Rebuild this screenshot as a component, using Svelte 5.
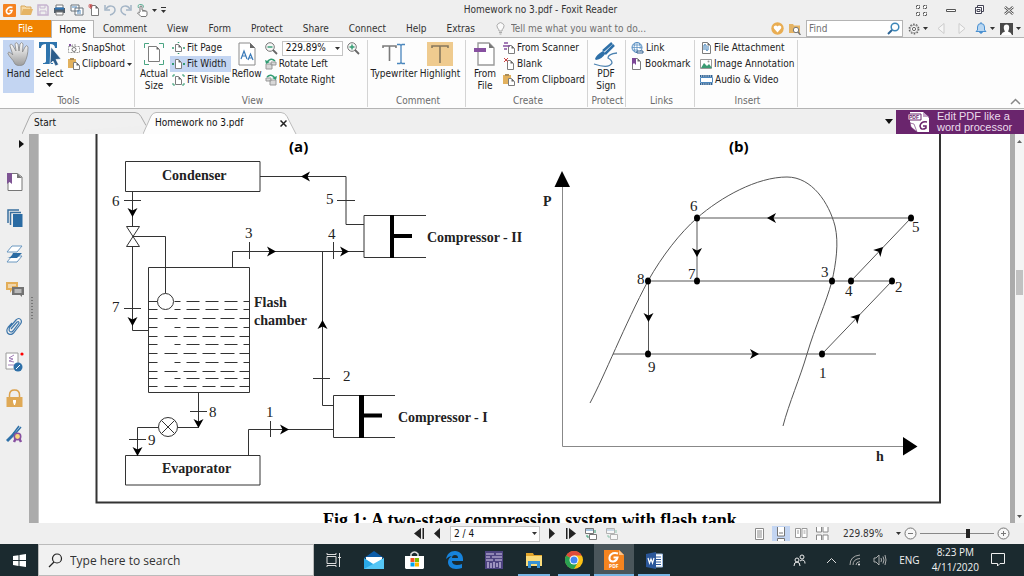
<script lang="ts">
    let zoom = '229.89%';
    let page = '2 / 4';
    let slider = 65;
    let find = '';
    let tell = '';
    let search = '';

    const menus = ['Comment', 'View', 'Form', 'Protect', 'Share', 'Connect', 'Help', 'Extras'];
    const quick = ['logo', 'open', 'save', 'print', 'batch', 'newdoc', 'undo', 'redo', 'touch'];
    const panels = ['bookmarks', 'pages', 'layers', 'comments', 'attach', 'signature', 'security', 'certify'];
    const apps = ['taskview', 'mail', 'store', 'edge', 'circuit', 'explorer', 'chrome', 'foxit', 'word'];
    const running = ['explorer', 'chrome', 'foxit', 'word'];

    // water level marks in the flash chamber
    const levels = [301.5, 309.5, 318.5, 327.5, 336.5, 344.5, 353.5, 362.5, 371.5, 378.5, 386.5];
    const evenMarks = 'h9 m7 0 h13 m6 0 h13 m6 0 h13 m5 0 h14 m5 0 h10';
    const oddMarks = 'h9 m17 0 h6 m6 0 h13 m6 0 h13 m6 0 h13 m6 0 h6';
    const longRows = [318.5, 336.5, 353.5, 371.5, 386.5];

    const arrows = [
        [301, 176.5, 180], [276, 251.5, 0], [349, 251.5, 0], [289, 429.5, 0],
        [132.5, 217, 90], [132.5, 326, 90], [198.5, 428, 90], [137.5, 456, 90], [322.5, 320, -90],
        [767, 218, 180], [697, 257, 90], [648.5, 322, 90], [759, 354, 0],
        [883, 247, -46], [860, 314, -46]
    ];
    const states = [[697, 218], [911, 218], [648, 281], [697, 281], [832, 281], [851, 281], [892, 281], [648, 354], [822, 354]];
    const labels = [
        ['6', 112, 206], ['5', 326, 204], ['3', 245, 238], ['4', 328, 239], ['7', 112, 312],
        ['2', 343, 381], ['8', 209, 417], ['1', 266, 417], ['9', 148, 445],
        ['6', 690, 211], ['5', 912, 232], ['8', 637, 284], ['7', 688, 279], ['3', 821, 277],
        ['4', 845, 296], ['2', 895, 292], ['9', 648, 372], ['1', 819, 378]
    ];
</script>

{#snippet sheet(x, y, w, h)}
    <path d="M{x} {y}h{w - 3}l3 3v{h - 3}h-{w}z" fill="#fff" stroke="#7c7c7c" />
    <path d="M{x + w - 3} {y}v3h3z" fill="#666" />
{/snippet}

{#snippet icon(name)}
    {#if name === 'logo'}
        <svg width="13" height="13" viewBox="0 0 13 13"><rect width="13" height="13" rx="1" fill="#f58220" /><path d="M9.5 3.5C6 2 3 5 3.500 8c1 3 5 2 5.500-1.500H6.500" fill="none" stroke="#fff" stroke-width="1.700" /></svg>
    {:else if name === 'open'}
        <svg width="13" height="12" viewBox="0 0 13 12"><path d="M1 11V2h4l1 1h5v2" fill="#f6d9a4" stroke="#d8a75a" /><path d="M1 11l2-6h10l-2 6z" fill="#e5b465" /></svg>
    {:else if name === 'save'}
        <svg width="12" height="12" viewBox="0 0 12 12"><path d="M1 1h8.500L11 2.500V11H1z" fill="#eee" stroke="#c6b4cf" stroke-width="1.500" /><path d="M3 1v3h5V1M3 11V7h6v4" fill="none" stroke="#c6b4cf" /></svg>
    {:else if name === 'print'}
        <svg width="13" height="12" viewBox="0 0 13 12"><path d="M3 1h7v3H3z" fill="#fff" stroke="#777" /><path d="M1 4h11v5H1z" fill="#555f68" /><path d="M2 4.500h9" stroke="#2f75b5" stroke-width="2" /><path d="M3 8h7v3H3z" fill="#fff" stroke="#777" /></svg>
    {:else if name === 'batch'}
        <svg width="14" height="12" viewBox="0 0 14 12"><path d="M1 1h8v6H1zM5 4h8v7H5z" fill="#fff" stroke="#68727a" /><path d="M2 3h5M7 7h4M7 9h4" stroke="#4d87bd" /></svg>
    {:else if name === 'newdoc'}
        <svg width="12" height="12" viewBox="0 0 12 12">{@render sheet(3.5, 1.5, 7, 10)}<path d="M0 2h5M2.500 0v5M1 0l3 4M4 0L1 4" stroke="#c74343" stroke-width=".7" /></svg>
    {:else if name === 'undo' || name === 'redo'}
        <svg class:flip={name === 'redo'} width="12" height="12" viewBox="0 0 12 12"><path d="M2 5c3-5 9-3 9 1 0 3-2 4-5 5" fill="none" stroke="#a4b5c6" stroke-width="1.500" /><path d="M1 1v5h5" fill="none" stroke="#a4b5c6" stroke-width="1.500" /></svg>
    {:else if name === 'touch'}
        <svg width="12" height="13" viewBox="0 0 12 13"><path d="M4 8V2.500q1-1 2 0V6l4 1q1 0 1 1v3l-1 1.500H5L1.500 9q1-1.500 2.500 0M7 6v2M9 7v1" fill="#fff" stroke="#777" /><path d="M2.500 4Q1 0 5 .5q3 0 2.500 3" fill="none" stroke="#62b199" /></svg>
    {:else if name === 'bulb'}
        <svg width="9" height="13" viewBox="0 0 9 13"><path d="M3 9q0-2-1.500-3a3.500 3.500 0 1 1 6 0Q6 7 6 9zM3 10.500h3M3.500 12h2" fill="#fafafa" stroke="#aaa" /></svg>
    {:else if name === 'heart'}
        <svg width="13" height="13" viewBox="0 0 13 13"><circle cx="6.500" cy="6.500" r="6.200" fill="#e9ad52" /><path d="M6.500 10.500L3 6.500Q2 4 4.500 3.500q1.500 0 2 1 .5-1 2-1Q11 4 10 6.500z" fill="#fff" /></svg>
    {:else if name === 'foldersearch'}
        <svg width="12" height="12" viewBox="0 0 12 12"><path d="M0 1h4l1 1.500h6V10H0z" fill="#e5b465" /><circle cx="7" cy="7" r="2.700" fill="#fff" stroke="#777" /><path d="M9 9l2.500 3" stroke="#777" stroke-width="1.500" /></svg>
    {:else if name === 'lens'}
        <svg width="13" height="13" viewBox="0 0 13 13"><circle cx="8" cy="5" r="3.800" fill="none" stroke="#3d87b8" stroke-width="1.500" /><path d="M5 8l-4 4" stroke="#2b6496" stroke-width="2" /></svg>
    {:else if name === 'gear'}
        <svg width="12" height="12" viewBox="0 0 12 12"><circle cx="6" cy="6" r="4.700" fill="none" stroke="#666" stroke-width="1.400" stroke-dasharray="1.600 1.350" /><circle cx="6" cy="6" r="3.800" fill="#f8f8f8" stroke="#888" stroke-width=".7" /><circle cx="6" cy="6" r="1.600" fill="#fff" stroke="#666" /></svg>
    {:else if name === 'prev' || name === 'next'}
        <svg class:flip={name === 'next'} width="8" height="11" viewBox="0 0 8 11"><path d="M7 .5v10l-6-5z" fill="#f6f6f6" stroke="#ccc" /></svg>
    {:else if name === 'bell'}
        <svg width="12" height="13" viewBox="0 0 12 13"><path d="M1 9.500L2.500 8V5q0-3.500 3.500-3.500T9.500 5v3L11 9.500z" fill="#b9d7f2" stroke="#4a90d0" /><path d="M6 0v1M4.500 10q1.500 3 3 0z" fill="#4a90d0" stroke="#4a90d0" /></svg>
    {:else if name === 'user'}
        <svg width="13" height="12" viewBox="0 0 13 12"><path fill="#4a4a4a" d="M0 0h13v12H0z" /><path d="M1 12q1-3 4-3.500C3 5 3.500 1.500 6.500 1.500S10 5 8 8.500q3 .5 4 3.500z" fill="#fff" /></svg>
    {:else if name === 'hand'}
        <svg width="24" height="24" viewBox="0 0 24 24"><defs><linearGradient id="glove" x2="0" y2="1"><stop stop-color="#fff" /><stop offset="1" stop-color="#9d9d9d" /></linearGradient></defs><path d="M8 22C6 17 2 15 .8 11q.7-2 3 0l2 2L3 4q0-3 2.500-1L9 9 8 2q.5-3 3 0l1 7 1-7q2-3 3 0l-.5 8L18 5q2-3 3 0c0 7-1 11-4 17-2 2-7 2-9 0z" fill="url(#glove)" stroke="#888" stroke-width=".8" /></svg>
    {:else if name === 'select'}
        <svg width="24" height="24" viewBox="0 0 24 24"><path d="M1 0h18v6h-2q0-4-5-4v17q0 2 3 2v1H5v-1q3 0 3-2V2Q3 2 3 6H1z" fill="#2e74ad" /><path d="M13 5l10 12-5 .5 2.500 5-3 1.500-2.500-5-3 3z" fill="#2d5d8b" stroke="#fff" stroke-width=".6" /></svg>
    {:else if name === 'snapshot'}
        <svg width="12" height="11" viewBox="0 0 12 11"><path d="M.5 3.500h11v6H.5zM4 3V2h4v1" fill="#fff" stroke="#999" stroke-dasharray="2 1" /><circle cx="6" cy="6.500" r="2" fill="none" stroke="#777" /><path d="M1 2h2" stroke="#8450a0" stroke-width="2" /></svg>
    {:else if name === 'clipboard' || name === 'fromclip'}
        <svg width="12" height="12" viewBox="0 0 12 12"><path d="M0 1h8v9H0z" fill="#e2b15e" /><path d="M2 0h4v2H2z" fill="#a98c5a" />{@render sheet(5.5, 4.5, 6, 7)}</svg>
    {:else if name === 'actual'}
        <svg width="20" height="22" viewBox="0 0 20 22"><path d="M.5 5V.5H5M15 .5h4.500V5M.5 17v4.500H5M15 21.500h4.500V17" fill="none" stroke="#4aa583" />{@render sheet(4.5, 3.5, 11, 15)}</svg>
    {:else if name === 'fitpage'}
        <svg width="13" height="12" viewBox="0 0 13 12"><path d="M0 6h2M11 6h2M6.500 0v1M6.500 11v1" stroke="#329c73" stroke-width="1.500" />{@render sheet(3.5, 2.5, 6, 7)}</svg>
    {:else if name === 'fitwidth'}
        <svg width="13" height="12" viewBox="0 0 13 12"><path d="M0 6h2M11 6h2" stroke="#329c73" stroke-width="2" />{@render sheet(3.5, 1.5, 6, 9)}</svg>
    {:else if name === 'fitvisible'}
        <svg width="13" height="12" viewBox="0 0 13 12"><path d="M1 3V1h2M10 1h2v2M1 9v2h2M10 11h2V9" fill="none" stroke="#329c73" />{@render sheet(3.5, 2.5, 6, 8)}</svg>
    {:else if name === 'reflow'}
        <svg width="18" height="24" viewBox="0 0 18 24"><path d="M1 1h11l5 5v17H1z" fill="#fff" stroke="#8a8a8a" /><path d="M12 1v5h5z" fill="#666" /><path d="M3 17l3-8 3 8M4 14h4M10 18l2.500-6 2.500 6M11 16h3" fill="none" stroke="#3a7ab8" stroke-width="1.200" /></svg>
    {:else if name === 'zoomout' || name === 'zoomin'}
        <svg width="13" height="13" viewBox="0 0 13 13"><circle cx="5" cy="5" r="4.300" fill="#f6f6f6" stroke="#777" /><path d="M8 8l4 4" stroke="#666" stroke-width="1.800" /><path d={name === 'zoomin' ? 'M2.500 5h5M5 2.500v5' : 'M2.500 5h5'} stroke="#329c73" stroke-width="1.400" /></svg>
    {:else if name === 'rotleft' || name === 'rotright'}
        <svg class:flip={name === 'rotright'} width="12" height="12" viewBox="0 0 12 12"><path d="M6 4h5v3H6zM1 6h6v5H1z" fill="#d8d8d8" stroke="#999" /><path d="M10 3Q6-1 2 4" fill="none" stroke="#329c73" stroke-width="1.500" /><path d="M0 2l1 4 4-2z" fill="#329c73" /></svg>
    {:else if name === 'typewriter'}
        <svg width="24" height="24" viewBox="0 0 24 24"><path d="M1 6V4h13v2M7.500 4v15" fill="none" stroke="#7b7b7b" stroke-width="1.600" /><path d="M15 2.500h3l1 1 1-1h3M15 21.500h3l1-1 1 1h3M19 3v18" fill="none" stroke="#4a86bd" stroke-width="1.300" /></svg>
    {:else if name === 'highlight'}
        <svg width="26" height="24" viewBox="0 0 26 24"><path d="M0 0h26v24H0z" fill="#efcb8f" /><path d="M5 6V4h16v2M13 4v17" fill="none" stroke="#86775d" stroke-width="1.600" /></svg>
    {:else if name === 'fromfile'}
        <svg width="22" height="24" viewBox="0 0 22 24"><path d="M4 1h11l5 5v17H4z" fill="#fff" stroke="#999" stroke-width="1.400" /><path d="M15 1v5h5z" fill="#777" /><path d="M0 6h12v4H0z" fill="#8750a0" /></svg>
    {:else if name === 'scanner'}
        <svg width="12" height="12" viewBox="0 0 12 12">{@render sheet(5.5, 3.5, 6, 8)}<path d="M1 1h4M0 4h7M1 7h3" stroke="#8750a0" stroke-width="1.500" /></svg>
    {:else if name === 'blank'}
        <svg width="12" height="12" viewBox="0 0 12 12">{@render sheet(4.5, 2.5, 6, 9)}<path d="M1 0l4 4M5 0L1 4" stroke="#c94040" /></svg>
    {:else if name === 'pen'}
        <svg width="26" height="26" viewBox="0 0 26 26"><path d="M10 10L19 2M12 13L21 4" stroke="#2e70a8" stroke-width="2.500" /><path d="M2 18q1-4 8-8l2.500 2.500Q9 18 3 19z" fill="#2e70a8" /><path d="M1 23q15 5 18-1 0-3-4-5 0-4 9-5" fill="none" stroke="#4c82b0" stroke-width="1.300" /></svg>
    {:else if name === 'link'}
        <svg width="13" height="12" viewBox="0 0 13 12"><circle cx="6" cy="5.500" r="5" fill="#fff" stroke="#4c86bd" /><path d="M1 5.500h10M6 .5v10M2 3h8M2 8h5M4 1Q2 5 4 10M8 1q2 4 1 6" fill="none" stroke="#4c86bd" stroke-width=".7" /><path d="M6 9h6v2H6z" fill="#fff" stroke="#2e5c8c" /></svg>
    {:else if name === 'bookmark'}
        <svg width="12" height="12" viewBox="0 0 12 12">{@render sheet(1.5, 0.5, 8, 11)}<path d="M1 0h4v7L3 5 1 7z" fill="#7b4796" /></svg>
    {:else if name === 'fileattach'}
        <svg width="12" height="12" viewBox="0 0 12 12">{@render sheet(2.5, 0.5, 8, 11)}<path d="M4 8V3q1.500-1 2 0v5q1.500 1 2 0V4" fill="none" stroke="#3d7fb8" /></svg>
    {:else if name === 'image'}
        <svg width="12" height="12" viewBox="0 0 12 12"><path d="M.5 1.500h11v9H.5z" fill="#fff" stroke="#999" /><path d="M1 10l3-5 3 3 2-2 3 4z" fill="#3a9b73" /><circle cx="8.500" cy="3.500" r="1" fill="#999" /></svg>
    {:else if name === 'video'}
        <svg width="13" height="10" viewBox="0 0 13 10"><path d="M0 1h13M0 9h13" stroke="#2c5f91" stroke-width="2" stroke-dasharray="1.500 .6" /><path d="M.5 2.500h12v5H.5z" fill="#fff" stroke="#4c86bd" /></svg>
    {:else if name === 'bookmarks'}
        <svg width="16" height="18" viewBox="0 0 16 18"><path d="M1 .5h9.500L15 4v13.500H1z" fill="#fff" stroke="#777" /><path d="M10 .5V5h5z" fill="#777" /><path d="M0 0h5v11l-2.500-2L0 11z" fill="#7e5494" /></svg>
    {:else if name === 'pages'}
        <svg width="16" height="19" viewBox="0 0 16 19"><path d="M1 14V1h11M3.500 16V3.500H14" fill="none" stroke="#386f9f" stroke-width="1.500" /><path d="M6 5h9.500v13H6z" fill="#2a6ba3" /></svg>
    {:else if name === 'layers'}
        <svg width="17" height="18" viewBox="0 0 17 18"><path d="M1 17l5-6h10l-5 6zM1 7l5-6h10l-5 6z" fill="#fff" stroke="#6b98c0" /><path d="M1 13q4 0 6-5h9l-5 5z" fill="#2a6ba3" /></svg>
    {:else if name === 'comments'}
        <svg width="18" height="16" viewBox="0 0 18 16"><path d="M0 0h12v8H6l-2 3V8H0z" fill="#e3ae59" /><path d="M6 5h12v8h-2v2l-2-2H6z" fill="#737373" /><path d="M2 3h8M2 5h4M8.500 8h7M8.500 10h7" stroke="#fff" /></svg>
    {:else if name === 'attach'}
        <svg width="17" height="18" viewBox="0 0 17 18"><path d="M5 12l6-7q2-1 2 1l-6 8q-2 2-3.500 0-1-2 .5-4l6-7q3-3 5 0 1 2-.5 4l-7 9q-3 3-6 0-1.500-3 .5-5.500l4-4.500" fill="none" stroke="#3d76aa" stroke-width="1.200" /></svg>
    {:else if name === 'signature'}
        <svg width="19" height="20" viewBox="0 0 19 20"><path d="M1 1h12v16H1z" fill="#fff" stroke="#9a9a9a" /><path d="M9 3L4 6l4 1-4 2 5 1M3 13h7" fill="none" stroke="#8d62a7" stroke-width=".8" /><circle cx="13" cy="15" r="4.500" fill="#2e70a8" /><path d="M11 17l4-4" stroke="#fff" /><circle cx="17" cy="2" r="1.600" fill="#f00" /></svg>
    {:else if name === 'security'}
        <svg width="17" height="19" viewBox="0 0 17 19"><path d="M3.500 9V6q0-5 5-5t5 5v3" fill="none" stroke="#dba14c" stroke-width="1.500" /><path d="M.5 8h16v10H.5z" fill="#dfa956" /><path d="M7 11h3v2l-1 3H8l-1-3z" fill="#fff" /></svg>
    {:else if name === 'certify'}
        <svg width="17" height="18" viewBox="0 0 17 18"><path d="M1 16l8-8" stroke="#2e70a8" stroke-width="3" /><path d="M7 9l6-8M9 9l6-7" stroke="#2e70a8" stroke-width="1.500" /><path d="M8 17l2-4M15 17l-2-4" stroke="#8750a0" stroke-width="2.500" /><circle cx="11.500" cy="11.500" r="3.200" fill="#fbd77e" stroke="#8750a0" stroke-width="1.600" /></svg>
    {:else if name === 'taskview'}
        <svg width="16" height="14" viewBox="0 0 16 14"><path d="M1 3.500h9v7H1zM1 0v1.500h9V0M1 14v-1.500h9V14M13.500 0v14M12 4.500h3" fill="none" stroke="#ddd" /></svg>
    {:else if name === 'mail'}
        <svg width="20" height="19" viewBox="0 0 20 19"><path d="M0 7l10-7 10 7z" fill="#0c5ca8" /><path d="M2 6h16v7H2z" fill="#fff" /><path d="M0 7l10 6.500L20 7v11H0z" fill="#2aa9e8" /><path d="M0 18L20 7v11z" fill="#55c6f5" /></svg>
    {:else if name === 'store'}
        <svg width="19" height="19" viewBox="0 0 19 19"><path d="M6 6V3q3.500-4 7 0v3" fill="none" stroke="#ddd" stroke-width="1.500" /><path d="M0 5h19v12l-1 1H1l-1-1z" fill="#fff" /><path d="M5.500 7h4v4h-4z" fill="#f25022" /><path d="M10 7h4v4h-4z" fill="#7fba00" /><path d="M5.500 11.500h4v4h-4z" fill="#00a4ef" /><path d="M10 11.500h4v4h-4z" fill="#ffb900" /></svg>
    {:else if name === 'edge'}
        <svg width="17" height="18" viewBox="0 0 17 18"><path d="M0 8C1 3 4 0 9 0s8 4 8 8v2H6c0 3 3 4 5 4q3 0 5-1v4q-3 1-6 1c-5 0-8-3-8-7 0-3 2-5 4-6Q3 5 0 8zm6-1h6q0-3-3-3T6 7z" fill="#1683dc" fill-rule="evenodd" /></svg>
    {:else if name === 'circuit'}
        <svg width="18" height="18" viewBox="0 0 18 18"><path d="M0 0h18v18H0z" fill="#4d4380" /><path d="M1 3h8M11 3h6M1 6h4M7 6h10M1 9h7M10 9h7M3 11v6M6 12v5M9 11v6M12 12v4M15 11v6" stroke="#d5cbea" stroke-width="1.200" /></svg>
    {:else if name === 'explorer'}
        <svg width="18" height="16" viewBox="0 0 18 16"><path d="M1 1h7l1 2h8v11H1z" fill="#e2a52c" /><path d="M1 4h16v10H1z" fill="#fbdc7b" /><path d="M3 9h12v7h-3v-4H6v4H3z" fill="#3a93d4" /></svg>
    {:else if name === 'chrome'}
        <svg width="18" height="18" viewBox="0 0 18 18"><circle cx="9" cy="9" r="9" fill="#fbc116" /><path d="M9 9L1.200 4.500A9 9 0 0 1 16.800 4.500H9z" fill="#df4b3d" /><path d="M9 9L1.200 4.500A9 9 0 0 0 9 18l4-7z" fill="#2aa152" /><circle cx="9" cy="9" r="4.500" fill="#fff" /><circle cx="9" cy="9" r="3.500" fill="#4285f4" /></svg>
    {:else if name === 'foxit'}
        <svg width="20" height="20" viewBox="0 0 20 20"><path d="M0 0h15l5 5v15H0z" fill="#f5841f" /><path d="M15 0v5h5z" fill="#fdc388" /><path d="M14 3.500C8 2 5 5 5.500 9c1 4 7 3 8-1.500h-4" fill="none" stroke="#fff" stroke-width="2" /><text x="5" y="18" font-size="5" font-weight="700" fill="#fff">PDF</text></svg>
    {:else if name === 'word'}
        <svg width="17" height="17" viewBox="0 0 17 17"><path d="M8 2h8.500v13H8z" fill="#fff" stroke="#9bb9e0" /><path d="M9 5h6M9 7.500h6M9 10h6M9 12.500h6" stroke="#2b579a" /><path d="M0 2l10-2v17L0 15z" fill="#2b579a" /><path d="M2 6l1.500 5L5 7l1.500 4L8 6" fill="none" stroke="#fff" stroke-width="1.200" /></svg>
    {:else if name === 'singlepage'}
        <svg width="10" height="12" viewBox="0 0 10 12"><path d="M.5.5h8v11h-8zM2 3h5M2 5h5M2 7h5M2 9h5" fill="#fff" stroke="#8a8a8a" /></svg>
    {:else if name === 'continuous'}
        <svg width="10" height="14" viewBox="0 0 10 14"><path d="M1.500 0v9h7V0M1.500 14v-2.500h7V14M3 6h4" fill="#fff" stroke="#777" /></svg>
    {:else if name === 'facing'}
        <svg width="13" height="11" viewBox="0 0 13 11"><path d="M.5.500h5v9h-5zM7 .500h5v9H7zM2 3h2M2 5h2M8.500 3h2M8.500 5h2" fill="#fff" stroke="#999" /></svg>
    {:else if name === 'contfacing'}
        <svg width="13" height="13" viewBox="0 0 13 13"><path d="M.5 0v5h5V0M7 0v5h5V0M.5 13V8h5v5M7 13V8h5v5" fill="#fff" stroke="#888" /></svg>
    {:else if name === 'windows'}
        <svg width="13" height="13" viewBox="0 0 13 13"><path d="M0 2l5.500-.8V6H0zM6.500 1L13 0v6H6.500zM0 7h5.500v5L0 11zM6.500 7H13v6l-6.500-1z" fill="#fff" /></svg>
    {:else if name === 'swap' || name === 'swapoff'}
        <svg class:faded={name === 'swapoff'} width="12" height="12" viewBox="0 0 12 12"><path d="M.5.500h8v5h-8zM4.500 6.500h7v5h-7z" fill="#fff" stroke="#777" /><path d="M1 2h7" stroke="#4c86bd" /><path d="M10 2v3M2 7v2h2" fill="none" stroke="#329c73" /></svg>
    {/if}
{/snippet}

{#snippet caret()}
    <svg class="caret" width="5" height="3" viewBox="0 0 5 3"><path d="M0 0h5L2.500 3z" fill="#333" /></svg>
{/snippet}

{#snippet small(name, text, active = false)}
    <button class="small" class:active>{@render icon(name)}<span>{text}</span></button>
{/snippet}

{#snippet big(name, text, active = false)}
    <button class="big" class:active><span class="pic">{@render icon(name)}</span><span>{text}</span></button>
{/snippet}

<div class="app">
    <header class="titlebar">
        <div class="quick">
            {#each quick as q}
                <button aria-label={q}>{@render icon(q)}</button>
            {/each}
            {@render caret()}
            <svg width="5" height="6" viewBox="0 0 5 6"><path d="M0 .5h5" stroke="#333" /><path d="M0 3h5L2.500 6z" fill="#333" /></svg>
        </div>
        <h1>Homework no 3.pdf - Foxit Reader</h1>
        <div class="window-buttons">
            <button aria-label="Full screen"><svg width="11" height="11" viewBox="0 0 11 11"><path d="M.5.500h3v3h-3zM7.500.500h3v3h-3zM.5 7.500h3v3h-3zM7.500 7.500h3v3h-3z" fill="#fff" stroke="#555" stroke-dasharray="1.500 .5" /></svg></button>
            <button aria-label="Minimize"><svg width="10" height="11" viewBox="0 0 10 11"><path d="M.5 4.500h9v2h-9z" fill="#fff" stroke="#555" /></svg></button>
            <button aria-label="Restore"><svg width="10" height="10" viewBox="0 0 10 10"><path d="M2.500.500h6v6h-6z" fill="#fff" stroke="#445" /><path d="M.5 2.500h6v6h-6zM2 4.500h3v2H2z" fill="#fff" stroke="#445" /></svg></button>
            <button aria-label="Close"><svg width="10" height="9" viewBox="0 0 10 9"><path d="M1 1l8 7M9 1L1 8" stroke="#555" stroke-width="2.500" /><path d="M1 1l8 7M9 1L1 8" stroke="#fff" /></svg></button>
        </div>
    </header>

    <nav class="menubar">
        <button class="file">File</button>
        <button class="home">Home</button>
        <div class="menus">
            {#each menus as m}
                <button>{m}</button>
            {/each}
        </div>
        <label class="tell">{@render icon('bulb')}<input bind:value={tell} placeholder="Tell me what you want to do..." aria-label="Tell me" /></label>
        <div class="tools">
            <button aria-label="Favourites">{@render icon('heart')}</button>
            <button aria-label="Search folder">{@render icon('foldersearch')}</button>
            <label class="find"><input bind:value={find} placeholder="Find" aria-label="Find" />{@render icon('lens')}</label>
            <button aria-label="Settings">{@render icon('gear')}{@render caret()}</button>
            <button aria-label="Previous" class="step">{@render icon('prev')}</button>
            <button aria-label="Next" class="step">{@render icon('next')}</button>
            <button aria-label="Notifications">{@render icon('bell')}{@render caret()}</button>
            <button aria-label="Account">{@render icon('user')}{@render caret()}</button>
        </div>
    </nav>

    <section class="ribbon">
        <div class="group tools-group">
            <div class="items">
                <button class="big active"><span class="pic">{@render icon('hand')}</span><span>Hand</span></button>
                <button class="big"><span class="pic">{@render icon('select')}</span><span>Select</span><svg class="drop" width="7" height="4" viewBox="0 0 7 4"><path d="M0 0h7L3.500 4z" fill="#111" /></svg></button>
                <div class="stack">
                    {@render small('snapshot', 'SnapShot')}
                    <button class="small">{@render icon('clipboard')}<span>Clipboard</span>{@render caret()}</button>
                </div>
            </div>
            <h2>Tools</h2>
        </div>
        <div class="group view-group">
            <div class="items">
                {@render big('actual', 'Actual Size')}
                <div class="stack">
                    {@render small('fitpage', 'Fit Page')}
                    {@render small('fitwidth', 'Fit Width', true)}
                    {@render small('fitvisible', 'Fit Visible')}
                </div>
                {@render big('reflow', 'Reflow')}
                <div class="stack">
                    <div class="zoomrow">
                        <button aria-label="Zoom out">{@render icon('zoomout')}</button>
                        <div class="drop-box">
                            <select bind:value={zoom} aria-label="Zoom level">
                                <option>100%</option>
                                <option>229.89%</option>
                            </select>
                            {@render caret()}
                        </div>
                        <button aria-label="Zoom in">{@render icon('zoomin')}</button>
                    </div>
                    {@render small('rotleft', 'Rotate Left')}
                    {@render small('rotright', 'Rotate Right')}
                </div>
            </div>
            <h2>View</h2>
        </div>
        <div class="group comment-group">
            <div class="items">
                {@render big('typewriter', 'Typewriter')}
                {@render big('highlight', 'Highlight')}
            </div>
            <h2>Comment</h2>
        </div>
        <div class="group create-group">
            <div class="items">
                {@render big('fromfile', 'From File')}
                <div class="stack">
                    {@render small('scanner', 'From Scanner')}
                    {@render small('blank', 'Blank')}
                    {@render small('fromclip', 'From Clipboard')}
                </div>
            </div>
            <h2>Create</h2>
        </div>
        <div class="group protect-group">
            <div class="items">{@render big('pen', 'PDF Sign')}</div>
            <h2>Protect</h2>
        </div>
        <div class="group links-group">
            <div class="items">
                <div class="stack">
                    {@render small('link', 'Link')}
                    {@render small('bookmark', 'Bookmark')}
                </div>
            </div>
            <h2>Links</h2>
        </div>
        <div class="group insert-group">
            <div class="items">
                <div class="stack">
                    {@render small('fileattach', 'File Attachment')}
                    {@render small('image', 'Image Annotation')}
                    {@render small('video', 'Audio & Video')}
                </div>
            </div>
            <h2>Insert</h2>
        </div>
        <button class="collapse" aria-label="Collapse ribbon"><svg width="11" height="7" viewBox="0 0 11 7"><path d="M1 6l4.500-4.500L10 6" fill="none" stroke="#888" stroke-width="1.500" /></svg></button>
    </section>

    <div class="doctabs">
        <button class="doctab">
            <svg class="shape" viewBox="0 0 124 22" preserveAspectRatio="none"><path d="M0 22L8 4q2-3.500 5-3.500h100q4 0 6 4l5 9" fill="#f0f0f0" stroke="#aaa" /></svg>
            <span>Start</span>
        </button>
        <button class="doctab current">
            <svg class="shape" viewBox="0 0 154 22" preserveAspectRatio="none"><path d="M0 22L8 4q2-3.500 5-3.500h125q4 0 6 4L153 22" fill="#fdfdfd" stroke="#bbb" /></svg>
            <span>Homework no 3.pdf</span>
            <svg width="7" height="7" viewBox="0 0 7 7"><path d="M.5.500l6 6M6.500.500l-6 6" stroke="#222" stroke-width="1.500" /></svg>
        </button>
        <div class="promo">
            <svg width="8" height="5" viewBox="0 0 8 5"><path d="M0 0h8L4 5z" fill="#111" /></svg>
            <a href="#promo">
                <svg width="23" height="22" viewBox="0 0 23 22"><path d="M2 11V1h13l6 6v14H9" fill="#fff" /><path d="M15 1v5h6z" fill="#c6a3c9" /><path d="M0 3h13v6H0z" fill="#fff" stroke="#6a256d" /><text x="1" y="8" font-size="5" font-weight="700" fill="#6a256d">PDF</text><path d="M19 11q-6-1-7 4 1 5 6 2v-2h-3" fill="none" stroke="#6a256d" stroke-width="1.500" /><path d="M2 12l4 1 3 8-6-5z" fill="#fff" stroke="#6a256d" stroke-width=".6" /></svg>
                <span>Edit PDF like a<br />word processor</span>
            </a>
        </div>
    </div>

    <main class="workspace">
        <aside class="sidebar">
            <svg class="expand" width="5" height="8" viewBox="0 0 5 8"><path d="M0 0l5 4-5 4z" fill="#111" /></svg>
            {#each panels as p}
                <button aria-label={p}>{@render icon(p)}</button>
            {/each}
        </aside>
        <div class="splitter"><svg width="2" height="24" viewBox="0 0 2 24"><path d="M1 0v24" stroke="#777" stroke-width="2" stroke-dasharray="1 2" /></svg></div>
        <div class="document">
            <svg class="figure" viewBox="39 134 971 389" preserveAspectRatio="xMidYMin slice">
                <path class="frame" d="M96.500 134V502.500H940V134" />
                <text class="heading" x="289" y="152">(a)</text>
                <text class="heading" x="729" y="152">(b)</text>

                <g class="pipe">
                    <path d="M125.500 161.500h134.500v30h-134.500zM260 176.500h86V224.500h18" />
                    <path d="M426 215.500h-62v42h62M395 395.500h-61.500v42H395" />
                    <path d="M132.500 191.500v35M126.500 226.500h13l-13 20h13zM132.500 236.500h33v57M132.500 246.500v84h16" />
                    <path d="M148.500 267.500h101v125h-101zM232.500 267v-15.500H364M322.500 251.500v154h11" />
                    <path d="M198.500 392.500V427.500H178M158 427.500h-20.500V455M248.500 455v-25.500h85M125.500 455.500h134.500v29.500h-134.500z" />
                    <path d="M337 200.500h18M124 200.500h17M124 308.500h17M249.500 242v17M333.500 242v17M313 378.500h17M190 411.500h17M270.500 421v16M129 439.500h17" />
                    <circle cx="168" cy="427" r="9.500" />
                    <path d="M161.500 420.500l13 13M174.500 420.500l-13 13" />
                    {#each levels as y}
                        <path d="M148.500 {y}{longRows.includes(y) ? evenMarks : oddMarks}" />
                    {/each}
                </g>
                <circle class="float" cx="165.500" cy="301.500" r="8" />
                <path d="M390 215h4v19h18v4h-18v20h-4zM359 395h5v18.500h18v4h-18v20.500h-5z" />

                <text class="name" x="162" y="180">Condenser</text>
                <text class="name" x="162" y="473">Evaporator</text>
                <text class="name" x="254" y="307">Flash</text>
                <text class="name" x="254" y="325">chamber</text>
                <text class="name" x="427" y="242">Compressor - II</text>
                <text class="name" x="398" y="422">Compressor - I</text>

                <path class="axis" d="M562.500 180V446.500H905" />
                <path d="M562 171l8 16h-15.500zM903 437l14.500 9.500-14.500 9z" />
                <text class="name" x="543" y="206">P</text>
                <text class="name" x="876" y="461">h</text>
                <path class="level" d="M697 218h214M648 281h244M613 354h263M697 218v63" />
                <path class="curve" d="M648.500 281v73M851 281l60-63M822 354l70-73" />
                <path class="curve" d="M590 403C604 377 625 324 648 281C662 256 680 233 697 218C721 197 757 177 787 177C812 177 829 203 835 226C839 243 836 263 832 281C826 303 815 327 807 354C800 378 789 403 783 426" />
                {#each states as [x, y]}
                    <ellipse cx={x} cy={y} rx="3" ry="3.500" />
                {/each}
                {#each arrows as [x, y, turn]}
                    <path d="M0 0l-9-5 2.500 5-2.500 5z" transform="translate({x} {y}) rotate({turn})" />
                {/each}
                {#each labels as [t, x, y]}
                    <text class="num" {x} {y}>{t}</text>
                {/each}
                <text class="caption" x="323" y="526">Fig 1: A two-stage compression system with flash tank</text>
            </svg>
        </div>
        <div class="edge"></div>
        <div class="scrollbar">
            <svg width="5" height="3" viewBox="0 0 5 3"><path d="M0 3h5L2.500 0z" fill="#666" /></svg>
            <div class="thumb"></div>
            <svg width="5" height="3" viewBox="0 0 5 3"><path d="M0 0h5L2.500 3z" fill="#555" /></svg>
        </div>
    </main>

    <footer class="statusbar">
        <div class="pager">
            <button aria-label="First page"><svg width="11" height="11" viewBox="0 0 11 11"><path d="M7 0v11L0 5.500zM8.500 0H10v11H8.500z" fill="#222" /></svg></button>
            <button aria-label="Previous page"><svg width="7" height="11" viewBox="0 0 7 11"><path d="M6 0v11L0 5.500z" fill="#222" /></svg></button>
            <div class="drop-box page-box">
                <select bind:value={page} aria-label="Page">
                    <option>1 / 4</option>
                    <option>2 / 4</option>
                    <option>3 / 4</option>
                    <option>4 / 4</option>
                </select>
                {@render caret()}
            </div>
            <button aria-label="Next page"><svg width="7" height="11" viewBox="0 0 7 11"><path d="M0 0v11l6-5.500z" fill="#222" /></svg></button>
            <button aria-label="Last page"><svg width="11" height="11" viewBox="0 0 11 11"><path d="M4 0v11l7-5.500zM1 0h1.500v11H1z" fill="#222" /></svg></button>
            <button aria-label="Previous view">{@render icon('swap')}</button>
            <button aria-label="Next view">{@render icon('swapoff')}</button>
        </div>
        <div class="zoombar">
            <button class="mode" aria-label="Single page">{@render icon('singlepage')}</button>
            <button class="mode active" aria-label="Continuous">{@render icon('continuous')}</button>
            <button class="mode" aria-label="Facing">{@render icon('facing')}</button>
            <button class="mode" aria-label="Continuous facing">{@render icon('contfacing')}</button>
            <span class="percent">{zoom}</span>
            {@render caret()}
            <button aria-label="Zoom out"><svg width="13" height="13" viewBox="0 0 13 13"><circle cx="6.500" cy="6.500" r="5.500" fill="#f7f7f7" stroke="#777" /><path d="M4 6.500h5" stroke="#777" /></svg></button>
            <input type="range" min="0" max="100" bind:value={slider} aria-label="Zoom" />
            <button aria-label="Zoom in"><svg width="13" height="13" viewBox="0 0 13 13"><circle cx="6.500" cy="6.500" r="5.500" fill="#f7f7f7" stroke="#777" /><path d="M4 6.500h5M6.500 4v5" stroke="#777" /></svg></button>
        </div>
    </footer>

    <div class="taskbar">
        <button class="start" aria-label="Start">{@render icon('windows')}</button>
        <label class="search">
            <svg width="15" height="15" viewBox="0 0 15 15"><circle cx="9" cy="5.500" r="4.500" fill="none" stroke="#222" stroke-width="1.200" /><path d="M6 9l-5 5" stroke="#222" stroke-width="1.200" /></svg>
            <input bind:value={search} placeholder="Type here to search" aria-label="Search" />
        </label>
        {#each apps as a}
            <button class="task" class:running={running.includes(a)} class:focused={a === 'foxit'} aria-label={a}>{@render icon(a)}</button>
        {/each}
        <div class="tray">
            <svg class="people" width="13" height="13" viewBox="0 0 13 13"><circle cx="9" cy="3" r="2" fill="none" stroke="#eee" /><circle cx="4" cy="6" r="2" fill="none" stroke="#eee" /><path d="M1 12q0-4 3-4t3 4M7 7q2-2 4-.500 1 1 1 3" fill="none" stroke="#eee" /></svg>
            <svg width="11" height="7" viewBox="0 0 11 7"><path d="M1 6l4.500-4.500L10 6" fill="none" stroke="#ddd" /></svg>
            <svg width="12" height="12" viewBox="0 0 12 12"><path d="M1 11Q1 2 11 1M4 11q0-6 7-6.500M7 11q0-3 4-3.500" fill="none" stroke="#aaa" /><circle cx="10" cy="10.500" r="1" fill="#eee" /></svg>
            <svg width="14" height="12" viewBox="0 0 14 12"><path d="M1 4h2l3-3v10L3 8H1zM8 4q1 2 0 4M10 2.500q2 3.500 0 7M12 1q2 5 0 10" fill="none" stroke="#bbb" stroke-width=".9" /></svg>
            <span>ENG</span>
            <span class="clock">8:23 PM<br />4/11/2020</span>
            <svg width="14" height="14" viewBox="0 0 14 14"><path d="M.500.500h13v10H9l-2.500 2.500v-2.500h-6z" fill="none" stroke="#eee" /></svg>
        </div>
    </div>
</div>

<style>
    :global(body) {
        margin: 0;
        background: #efefef;
    }

    .app {
        display: flex;
        flex-direction: column;
        height: 100vh;
        overflow: hidden;
        background: #efefef;
        color: #333;
        font-family: "DejaVu Sans Condensed", Tahoma, "Noto Sans", sans-serif;
        font-size: 10px;
        line-height: 12px;
    }

    button,
    input,
    select {
        margin: 0;
        padding: 0;
        border: 0;
        background: none;
        color: inherit;
        font: inherit;
        outline: none;
    }

    button {
        display: flex;
        align-items: center;
        justify-content: center;
    }

    svg {
        display: block;
        flex: none;
    }

    h1,
    h2 {
        margin: 0;
        font-size: 10px;
        font-weight: 400;
    }

    .flip {
        transform: scaleX(-1);
    }

    .faded {
        opacity: 0.5;
    }

    .titlebar {
        display: grid;
        grid-template-columns: 1fr auto 1fr;
        align-items: center;
        height: 20px;
        padding: 0 10px 0 3px;
    }

    .titlebar h1 {
        padding-left: 64px;
    }

    .quick,
    .window-buttons {
        display: flex;
        align-items: center;
        gap: 4px;
    }

    .window-buttons {
        justify-content: flex-end;
        gap: 19px;
    }

    .menubar {
        display: flex;
        height: 18px;
        flex: none;
        border-bottom: 1px solid #b4b4b4;
        box-sizing: border-box;
    }

    .file {
        width: 51px;
        background: #f08300;
        color: #fff;
    }

    .home {
        width: 43px;
        border: 1px solid #b4b4b4;
        border-bottom: 0;
        background: #fdfdfd;
        color: #111;
        margin-bottom: -1px;
    }

    .menus {
        display: flex;
        gap: 20px;
        padding-left: 9px;
    }

    .tell {
        display: flex;
        align-items: center;
        gap: 6px;
        margin-left: 21px;
        color: #777;
    }

    .tell input {
        width: 160px;
    }

    input::placeholder {
        color: #707070;
        opacity: 1;
    }

    .tools {
        display: flex;
        align-items: center;
        gap: 5px;
        margin-left: auto;
        padding-right: 3px;
    }

    .tools button {
        gap: 3px;
    }

    .tools .step {
        width: 16px;
    }

    .find {
        display: flex;
        align-items: center;
        width: 97px;
        height: 17px;
        box-sizing: border-box;
        border: 1px solid #b4b4b4;
        background: #fff;
        padding: 0 2px;
    }

    .find input {
        flex: 1;
        min-width: 0;
    }

    .ribbon {
        display: flex;
        flex: none;
        height: 71px;
        box-sizing: border-box;
        padding: 2px 3px 0 0;
        background: #fdfdfd;
        border-bottom: 1px solid #b4b4b4;
        color: #222;
    }

    .group {
        display: flex;
        flex-direction: column;
        justify-content: space-between;
        flex: none;
        box-sizing: border-box;
        margin-bottom: 1px;
        border-right: 1px solid #d4d4d4;
    }

    .group h2 {
        text-align: center;
        color: #6b6b6b;
    }

    .items {
        display: flex;
    }

    .tools-group {
        width: 135px;
        padding-left: 3px;
    }

    .tools-group .stack {
        padding-left: 1px;
    }

    .view-group {
        width: 233px;
        padding-left: 3px;
    }

    .comment-group {
        width: 98px;
        padding-left: 3px;
    }

    .create-group {
        width: 122px;
        padding-left: 3px;
    }

    .protect-group {
        width: 38px;
        padding-left: 2px;
    }

    .links-group {
        width: 69px;
        padding-left: 3px;
    }

    .insert-group {
        width: 103px;
        padding-left: 3px;
    }

    .big {
        flex-direction: column;
        justify-content: flex-start;
        min-width: 31px;
        height: 53px;
    }

    .big .pic {
        display: flex;
        align-items: center;
        justify-content: center;
        height: 28px;
    }

    .view-group .big,
    .create-group .big,
    .protect-group .big {
        width: 32px;
    }

    .comment-group .big {
        width: 46px;
    }

    .active {
        background: #c3d5f2;
    }

    .drop {
        margin-top: 3px;
    }

    .stack {
        display: flex;
        flex-direction: column;
    }

    .small {
        justify-content: flex-start;
        height: 16px;
        gap: 2px;
        padding: 0 1px 0 2px;
        white-space: nowrap;
    }

    .zoomrow {
        display: flex;
        align-items: center;
        gap: 4px;
        height: 16px;
        padding-left: 2px;
    }

    .drop-box {
        display: flex;
        align-items: center;
        width: 61px;
        height: 15px;
        box-sizing: border-box;
        border: 1px solid #c4c4c4;
        background: #fff;
        color: #111;
        padding: 0 2px 0 3px;
    }

    .drop-box select {
        flex: 1;
        min-width: 0;
        appearance: none;
    }

    .collapse {
        margin-left: auto;
        align-self: flex-end;
        height: 14px;
    }

    .doctabs {
        display: flex;
        align-items: flex-end;
        flex: none;
        height: 25px;
        padding-left: 22px;
        color: #111;
    }

    .doctab {
        position: relative;
        justify-content: flex-start;
        width: 124px;
        height: 22px;
        padding-left: 12px;
    }

    .doctab.current {
        width: 154px;
        margin-left: -3px;
        justify-content: space-between;
        padding-right: 10px;
    }

    .doctab .shape {
        position: absolute;
        inset: 0;
        width: 100%;
        height: 100%;
    }

    .doctab :not(.shape) {
        position: relative;
    }

    .promo {
        display: flex;
        align-items: center;
        gap: 3px;
        margin-left: auto;
        align-self: stretch;
    }

    .promo a {
        display: flex;
        align-items: center;
        gap: 6px;
        height: 24px;
        width: 116px;
        padding-left: 12px;
        background: #6a256d;
        color: #eadcec;
        font: 11px/11px "Liberation Sans", Arial, sans-serif;
        text-decoration: none;
        white-space: nowrap;
    }

    .workspace {
        display: flex;
        flex: 1;
        min-height: 0;
    }

    .sidebar {
        display: flex;
        flex-direction: column;
        align-items: center;
        width: 29px;
        flex: none;
    }

    .expand {
        align-self: flex-end;
        margin: 6px 5px 16px 0;
    }

    .sidebar button {
        width: 28px;
        height: 36px;
        flex: none;
    }

    .splitter {
        display: flex;
        align-items: center;
        width: 10px;
        flex: none;
        box-sizing: border-box;
        padding: 0 0 40px 2px;
        background: #ababab;
        border-right: 1px solid #c8c8c8;
    }

    .document {
        flex: 1;
        min-width: 0;
        background: #fff;
        overflow: hidden;
    }

    .figure {
        width: 100%;
        height: 100%;
        font-family: "Liberation Serif", "Times New Roman", serif;
    }

    .pipe,
    .axis,
    .level,
    .curve,
    .frame {
        fill: none;
        stroke: #333;
    }

    .frame {
        stroke-width: 2;
    }

    .float {
        fill: #fff;
        stroke: #333;
    }

    .axis {
        stroke: #888;
    }

    .level {
        stroke: #aaa;
        stroke-width: 2;
    }

    .curve {
        stroke: #555;
    }

    .heading {
        font: 700 15px "Open Sans", sans-serif;
    }

    .name {
        font-size: 14px;
        font-weight: 700;
        fill: #222;
    }

    .num {
        font-size: 15px;
        fill: #222;
    }

    .caption {
        font-size: 18px;
        font-weight: 700;
    }

    .edge {
        width: 5px;
        background: #ababab;
    }

    .scrollbar {
        display: flex;
        flex-direction: column;
        align-items: center;
        justify-content: space-between;
        width: 9px;
        box-sizing: border-box;
        padding: 6px 0 5px;
        background: #f4f4f4;
    }

    .scrollbar .thumb {
        width: 7px;
        height: 25px;
        margin-bottom: 94px;
        background: #c1c1c1;
    }

    .statusbar {
        display: flex;
        align-items: center;
        flex: none;
        height: 21px;
    }

    .pager,
    .zoombar {
        display: flex;
        align-items: center;
        gap: 9px;
    }

    .pager {
        margin-left: auto;
    }

    .page-box {
        width: 90px;
        height: 16px;
    }

    .zoombar {
        gap: 3px;
        margin-left: 133px;
        padding-right: 14px;
    }

    .mode {
        width: 18px;
        height: 15px;
    }

    .percent {
        padding: 0 10px 0 8px;
    }

    input[type='range'] {
        appearance: none;
        width: 74px;
        height: 12px;
        background: linear-gradient(#888, #888) center / 100% 1px no-repeat;
    }

    input[type='range']::-webkit-slider-thumb {
        appearance: none;
        width: 4px;
        height: 9px;
        background: #222;
    }

    .taskbar {
        display: flex;
        flex: none;
        height: 32px;
        background: #1b2a2f;
        color: #f2f2f2;
        font-family: "Open Sans", "Noto Sans", sans-serif;
    }

    .start {
        width: 38px;
    }

    .search {
        display: flex;
        align-items: center;
        gap: 7px;
        width: 276px;
        box-sizing: border-box;
        padding-left: 9px;
        border: 1px solid #bbb;
        background: #f1f1f1;
        font-size: 12px;
    }

    .search input {
        flex: 1;
        min-width: 0;
    }

    .search input::placeholder {
        color: #333;
    }

    .task {
        width: 40px;
    }

    .running {
        background: linear-gradient(#76b5e4, #76b5e4) bottom / 32px 2px no-repeat;
    }

    .focused {
        background-color: #4a565b;
        background-size: 100% 2px;
    }

    .tray {
        display: flex;
        align-items: center;
        gap: 12px;
        margin-left: auto;
        padding-right: 19px;
    }

    .people {
        margin-right: 8px;
    }

    .clock {
        text-align: center;
        line-height: 15px;
    }
</style>
